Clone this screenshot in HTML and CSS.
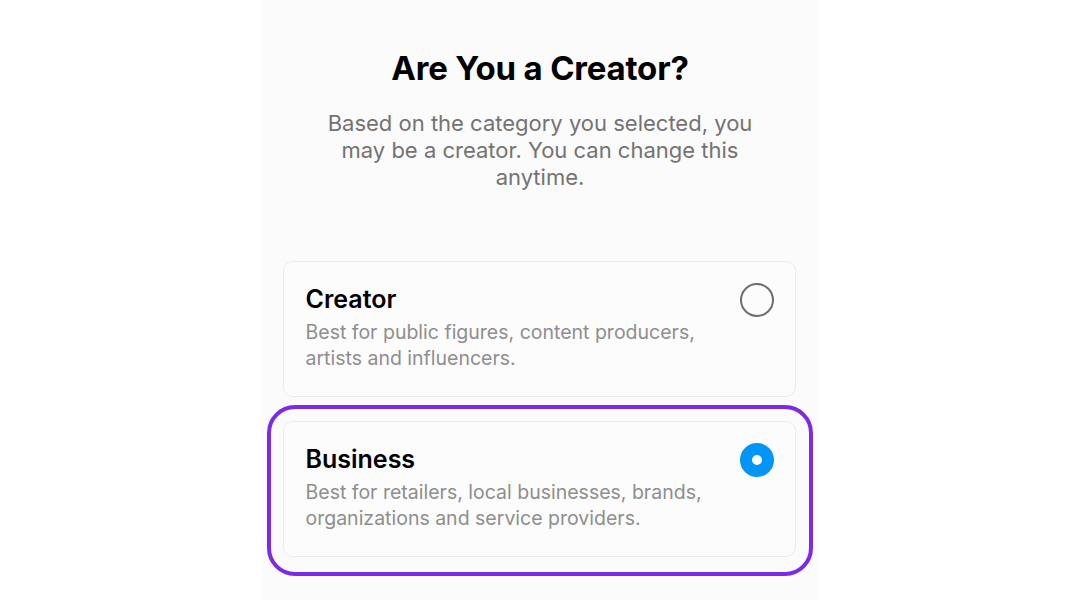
FILE: index.html
```html
<!DOCTYPE html>
<html lang="en">
<head>
<meta charset="utf-8">
<title>Are You a Creator?</title>
<link rel="stylesheet" href="styles.css">
</head>
<body>
<main class="panel">
  <h1 class="title">Are You a Creator?</h1>
  <p class="subtitle">Based on the category you selected, you may be a creator. You can change this anytime.</p>
  <div class="options">
    <div class="card">
      <div class="card-text">
        <h2 class="card-title">Creator</h2>
        <p class="card-desc">Best for public figures, content producers, artists and influencers.</p>
      </div>
      <span class="radio"></span>
    </div>
    <div class="card card-selected">
      <div class="card-text">
        <h2 class="card-title">Business</h2>
        <p class="card-desc">Best for retailers, local businesses, brands, organizations and service providers.</p>
      </div>
      <span class="radio radio-on"></span>
    </div>
  </div>
</main>
</body>
</html>
```
FILE: styles.css
```css
html, body {
  margin: 0;
  padding: 0;
  background: #ffffff;
  height: 100%;
}

body {
  font-family: Inter, "Noto Sans", "Liberation Sans", sans-serif;
  overflow: hidden;
}

.panel {
  width: 557px;
  height: 600px;
  margin: 0 auto;
  background: #fbfbfb;
  box-sizing: border-box;
  padding-top: 48px;
  display: flex;
  flex-direction: column;
  align-items: center;
}

.title {
  margin: 0;
  font-size: 33px;
  line-height: 40px;
  font-weight: 700;
  color: #000000;
  letter-spacing: -0.2px;
}

.subtitle {
  margin: 22px 0 0;
  width: 440px;
  text-align: center;
  font-size: 22px;
  line-height: 27px;
  color: #737373;
  font-weight: 400;
}

.options {
  margin: 70px 2px 0 0;
  width: 513px;
  display: flex;
  flex-direction: column;
  gap: 24px;
}

.card {
  position: relative;
  height: 136px;
  box-sizing: border-box;
  border: 1px solid #ececec;
  border-radius: 10px;
  background: #fcfcfc;
  padding: 21px 21px 0 22px;
  display: flex;
  justify-content: space-between;
  align-items: flex-start;
}

.card-selected::after {
  content: "";
  position: absolute;
  top: -17px;
  left: -17px;
  right: -18px;
  bottom: -20px;
  border: 4px solid #7d2ae8;
  border-radius: 28px;
  pointer-events: none;
}

.card-text {
  width: 430px;
}

.card-title {
  margin: 0;
  font-size: 25px;
  line-height: 32px;
  font-weight: 600;
  color: #000000;
}

.card-desc {
  margin: 4px 0 0;
  font-size: 19.5px;
  line-height: 26px;
  color: #8e8e8e;
}

.radio {
  flex: none;
  width: 34px;
  height: 34px;
  box-sizing: border-box;
  border: 2px solid #6e6e6e;
  border-radius: 50%;
  margin-top: 0;
}

.radio-on {
  border: 12px solid #0095f6;
  background: #ffffff;
}
```
